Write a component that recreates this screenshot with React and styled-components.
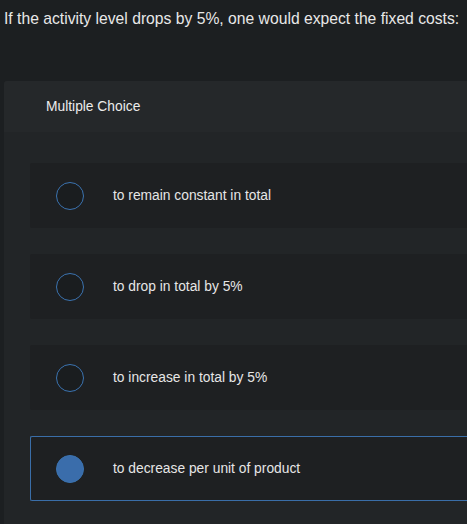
import React, { useState } from "react";
import styled, { createGlobalStyle } from "styled-components";

const GlobalStyle = createGlobalStyle`
  body {
    margin: 0;
    background: #1c1f21;
    font-family: 'Liberation Sans', Arial, sans-serif;
    color: #e4e4e4;
    overflow: hidden;
  }
`;

const Question = styled.p`
  margin: 0;
  padding: 9px 4px 0;
  font-size: 15.7px;
  line-height: 20px;
  color: #e8e8e8;
  white-space: nowrap;
`;

const Panel = styled.section`
  margin: 52px 0 0 4px;
  background: #222527;
  border-top-left-radius: 3px;
  min-height: 443px;
`;

const PanelHeader = styled.div`
  height: 51px;
  display: flex;
  align-items: center;
  padding-left: 42px;
  background: #25282a;
  border-top-left-radius: 3px;
  font-size: 13.8px;
  color: #ececec;
`;

const OptionList = styled.div`
  display: flex;
  flex-direction: column;
  gap: 26px;
  padding: 31px 0 0 26px;
`;

const Option = styled.label`
  display: flex;
  align-items: center;
  gap: 29px;
  height: 65px;
  box-sizing: border-box;
  padding-left: 25px;
  background: #1e2022;
  border: 1px solid ${(props) => (props.selected ? "#3a6ea8" : "transparent")};
  border-right: none;
  border-radius: 2px 0 0 2px;
  cursor: pointer;
  font-size: 13.8px;
  color: #e6e6e6;
`;

const Radio = styled.span`
  width: 28px;
  height: 28px;
  box-sizing: border-box;
  border-radius: 50%;
  flex-shrink: 0;
  border: 1.5px solid #3b73b0;
  background: ${(props) => (props.checked ? "#3a6dab" : "#1a1d1f")};
`;

const choices = [
  "to remain constant in total",
  "to drop in total by 5%",
  "to increase in total by 5%",
  "to decrease per unit of product",
];

const App = () => {
  const [selected, setSelected] = useState(3);

  return (
    <>
      <GlobalStyle />
      <Question>
        If the activity level drops by 5%, one would expect the fixed costs:
      </Question>
      <Panel>
        <PanelHeader>Multiple Choice</PanelHeader>
        <OptionList>
          {choices.map((text, i) => (
            <Option
              key={text}
              selected={i === selected}
              onClick={() => setSelected(i)}
            >
              <Radio checked={i === selected} />
              {text}
            </Option>
          ))}
        </OptionList>
      </Panel>
    </>
  );
};

export default App;
